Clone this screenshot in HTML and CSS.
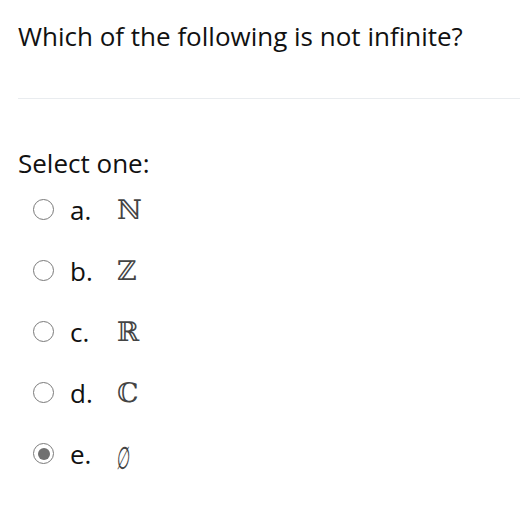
FILE: index.html
```html
<!DOCTYPE html>
<html lang="en">
<head>
    <meta charset="UTF-8">
    <title>Question</title>
    <link rel="stylesheet" href="styles.css">
</head>
<body>
    <div class="question">
        <div class="qtext">Which of the following is not infinite?</div>
        <hr class="divider">

        <div class="ablock">
            <div class="prompt">Select one:</div>
            <div class="answer">
                <label class="option">
                    <input type="radio" name="q1">
                    <span class="letter">a.</span>
                    <span class="math">ℕ</span>
                </label>
                <label class="option">
                    <input type="radio" name="q1">
                    <span class="letter">b.</span>
                    <span class="math">ℤ</span>
                </label>
                <label class="option">
                    <input type="radio" name="q1">
                    <span class="letter">c.</span>
                    <span class="math">ℝ</span>
                </label>
                <label class="option">
                    <input type="radio" name="q1">
                    <span class="letter">d.</span>
                    <span class="math">ℂ</span>
                </label>
                <label class="option">
                    <input type="radio" name="q1" checked>
                    <span class="letter">e.</span>
                    <span class="math empty">∅</span>
                </label>
            </div>
        </div>
    </div>
</body>
</html>
```

FILE: styles.css
```css
* {
    margin: 0;
    padding: 0;
    box-sizing: border-box;
}

body {
    font-family: "Open Sans", "Noto Sans", sans-serif;
    color: #111111;
    background: #ffffff;
    padding: 18px 0 0 18px;
}

.qtext {
    font-size: 26px;
    line-height: 36px;
}

.divider {
    border: 0;
    border-top: 1px solid #e9ecef;
    margin-top: 44px;
}

.ablock {
    margin-top: 46px;
}

.prompt {
    font-size: 26px;
    line-height: 36px;
}

.answer {
    padding-left: 15px;
    margin-top: -2px;
}

.option {
    display: flex;
    align-items: center;
    height: 61px;
    font-size: 26px;
}

.option input {
    appearance: none;
    width: 21px;
    height: 21px;
    border: 1.5px solid #7a7a7a;
    border-radius: 50%;
    background: #ffffff;
    margin-right: 16px;
    display: grid;
    place-content: center;
}

.option input:checked::before {
    content: "";
    width: 12px;
    height: 12px;
    border-radius: 50%;
    background: #707070;
}

.letter {
    width: 47px;
}

.math {
    font-family: "DejaVu Serif", serif;
    font-size: 27px;
    color: #444444;
}

.math.empty {
    display: inline-block;
    font-size: 30px;
    transform: translateY(4px) scaleX(0.5) scaleY(1.05) skewX(-12deg);
    transform-origin: left center;
}
```
